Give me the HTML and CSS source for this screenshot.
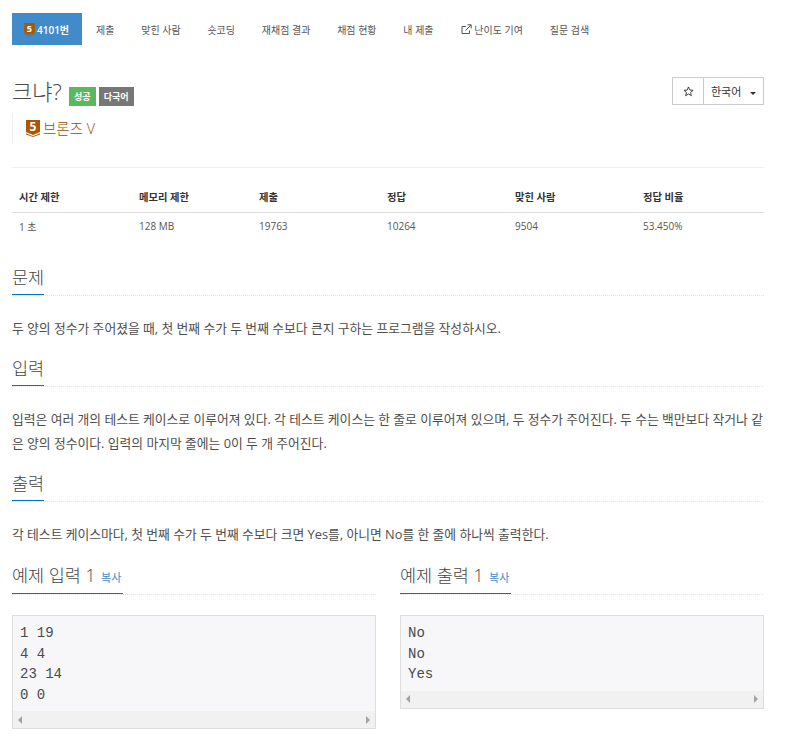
FILE: index.html
```html
<!DOCTYPE html>
<html lang="ko">
<head>
  <meta charset="UTF-8">
  <meta name="viewport" content="width=device-width, initial-scale=1.0">
  <title>4101번: 크냐?</title>
  <link rel="stylesheet" href="styles.css">
</head>
<body>
  <div class="page">
    <ul class="nav-tabs">
      <li class="active">
        <a href="#">
          <svg class="tier-icon tier-icon-small" viewBox="0 0 14 17"><path d="M0 0H14V12L7 15L0 12Z" fill="#ad5600"/><path d="M0 13.2L7 16.2L14 13.2V14.4L7 17L0 14.4Z" fill="#ad5600"/><text x="7" y="11.2" text-anchor="middle" class="tier-num">5</text></svg>
          4101번
        </a>
      </li>
      <li><a href="#">제출</a></li>
      <li><a href="#">맞힌 사람</a></li>
      <li><a href="#">숏코딩</a></li>
      <li><a href="#">재채점 결과</a></li>
      <li><a href="#">채점 현황</a></li>
      <li><a href="#">내 제출</a></li>
      <li>
        <a href="#">
          <svg class="ext-icon" viewBox="0 0 11 11"><path d="M8.5 6.5V9.5H1V2.5H5M4.5 6.5L10 1M6.5 .8H10.2V4.5" fill="none" stroke="#555" stroke-width="1"/></svg>
          난이도 기여
        </a>
      </li>
      <li><a href="#">질문 검색</a></li>
    </ul>

    <div class="title-row">
      <div class="title-left">
        <h1>크냐?</h1>
        <span class="label label-green">성공</span>
        <span class="label label-gray">다국어</span>
      </div>
      <div class="btn-group">
        <button class="btn btn-star">
          <svg class="star-icon" viewBox="0 0 12 12"><path d="M6 1L7.4 4.4L11 4.7L8.3 7L9.1 10.6L6 8.7L2.9 10.6L3.7 7L1 4.7L4.6 4.4Z" fill="none" stroke="#333" stroke-width="1"/></svg>
        </button>
        <button class="btn btn-lang">한국어 <span class="caret"></span></button>
      </div>
    </div>

    <blockquote class="tier-quote">
      <svg class="tier-icon" viewBox="0 0 14 17"><path d="M0 0H14V12L7 15L0 12Z" fill="#ad5600"/><path d="M0 13.2L7 16.2L14 13.2V14.4L7 17L0 14.4Z" fill="#ad5600"/><text x="7" y="11.2" text-anchor="middle" class="tier-num">5</text></svg>
      <a href="#">브론즈 V</a>
    </blockquote>

    <table class="info">
      <thead>
        <tr>
          <th class="col-1">시간 제한</th>
          <th class="col-1">메모리 제한</th>
          <th class="col-2">제출</th>
          <th class="col-2">정답</th>
          <th class="col-2">맞힌 사람</th>
          <th>정답 비율</th>
        </tr>
      </thead>
      <tbody>
        <tr>
          <td>1 초</td>
          <td>128 MB</td>
          <td>19763</td>
          <td>10264</td>
          <td>9504</td>
          <td>53.450%</td>
        </tr>
      </tbody>
    </table>

    <section class="section">
      <div class="headline"><h2>문제</h2></div>
      <p>두 양의 정수가 주어졌을 때, 첫 번째 수가 두 번째 수보다 큰지 구하는 프로그램을 작성하시오.</p>
    </section>

    <section class="section">
      <div class="headline"><h2>입력</h2></div>
      <p>입력은 여러 개의 테스트 케이스로 이루어져 있다. 각 테스트 케이스는 한 줄로 이루어져 있으며, 두 정수가 주어진다. 두 수는 백만보다 작거나 같은 양의 정수이다. 입력의 마지막 줄에는 0이 두 개 주어진다.</p>
    </section>

    <section class="section">
      <div class="headline"><h2>출력</h2></div>
      <p>각 테스트 케이스마다, 첫 번째 수가 두 번째 수보다 크면 Yes를, 아니면 No를 한 줄에 하나씩 출력한다.</p>
    </section>

    <div class="samples">
      <div class="sample">
        <div class="headline"><h2>예제 입력 1 <a class="copy" href="#">복사</a></h2></div>
        <div class="pre-box">
          <pre>1 19
4 4
23 14
0 0</pre>
          <div class="scrollbar"><span class="arrow-left"></span><span class="arrow-right"></span></div>
        </div>
      </div>
      <div class="sample">
        <div class="headline"><h2>예제 출력 1 <a class="copy" href="#">복사</a></h2></div>
        <div class="pre-box">
          <pre>No
No
Yes</pre>
          <div class="scrollbar"><span class="arrow-left"></span><span class="arrow-right"></span></div>
        </div>
      </div>
    </div>
  </div>
</body>
</html>
```

FILE: styles.css
```css
/* 기본 */
body {
  margin: 0;
  font-family: "Open Sans", "Noto Sans CJK KR", sans-serif;
  font-size: 12px;
  color: #555;
  background: #fff;
}

a {
  text-decoration: none;
}

.page {
  width: 752px;
  height: 741px;
  overflow: hidden;
  margin-left: 12px;
  padding-top: 13px;
  box-sizing: border-box;
}

/* 탭 */
.nav-tabs {
  display: flex;
  margin: 0;
  padding: 0;
  list-style: none;
  height: 32px;
}

.nav-tabs a {
  display: flex;
  align-items: center;
  gap: 3px;
  height: 32px;
  padding: 0 13.4px;
  font-size: 10px;
  color: #555;
}

.nav-tabs li:nth-child(2) a {
  padding-left: 14px;
}

.nav-tabs .active a {
  width: 70px;
  box-sizing: border-box;
  padding: 0 0 0 12px;
  background: #428bca;
  color: #fff;
  font-weight: 600;
}

.tier-icon {
  width: 14px;
  height: 17px;
  overflow: visible;
}

.tier-icon-small {
  width: 11px;
  height: 13px;
  margin-right: -1px;
}

.tier-num {
  font-family: "Open Sans", sans-serif;
  font-size: 12px;
  font-weight: 700;
  fill: #fff;
}

.ext-icon {
  width: 11px;
  height: 11px;
  margin: 0 -1px 0 1px;
}

/* 제목 */
.title-row {
  display: flex;
  justify-content: space-between;
  margin-top: 32px;
  height: 36px;
}

.title-left {
  display: flex;
  align-items: flex-start;
}

h1 {
  margin: 0 7px 0 0;
  font-size: 22px;
  font-weight: 300;
  line-height: 28px;
  color: #4a4a4a;
}

.label {
  margin: 10px 3px 0 0;
  height: 19px;
  line-height: 19px;
  padding: 0 5px;
  font-size: 9px;
  font-weight: 700;
  color: #fff;
}

.label-green {
  width: 17px;
  text-align: center;
  background: #5cb85c;
}

.label-gray {
  background: #777;
}

.btn-group {
  display: flex;
  height: 28px;
}

.btn {
  font-family: inherit;
  font-size: 11px;
  color: #333;
  background: #fff;
  border: 1px solid #ccc;
  padding: 0;
  height: 28px;
}

.btn-star {
  display: flex;
  align-items: center;
  justify-content: center;
  width: 32px;
}

.star-icon {
  width: 11px;
  height: 11px;
}

.btn-lang {
  width: 61px;
  margin-left: -1px;
}

.caret {
  display: inline-block;
  margin-left: 6px;
  vertical-align: middle;
  border-top: 3px solid #333;
  border-left: 3px solid transparent;
  border-right: 3px solid transparent;
}

.tier-quote {
  display: flex;
  align-items: center;
  gap: 3px;
  height: 31px;
  margin: 0;
  padding-left: 13px;
  border-left: 1px solid #eee;
  font-size: 14.5px;
  font-weight: 300;
}

.tier-quote a {
  margin-top: -3px;
  color: #994c00;
}

/* 정보 표 */
.info {
  width: 100%;
  margin-top: 23px;
  border-top: 1px solid #eee;
  border-collapse: collapse;
  table-layout: fixed;
  font-size: 10px;
}

.info th {
  height: 36px;
  padding: 0 7px 8px;
  vertical-align: bottom;
  text-align: left;
  font-size: 10.3px;
  font-weight: 700;
  color: #333;
  border-bottom: 1px solid #ddd;
}

.col-1 {
  width: 120px;
  box-sizing: border-box;
}

.col-2 {
  width: 128px;
  box-sizing: border-box;
}

.info td {
  height: 26px;
  padding: 0 7px;
}

/* 본문 */
.section {
  margin-top: 17px;
}

.info + .section {
  margin-top: 27px;
}

.headline {
  border-bottom: 1px dotted #e4e4e4;
  height: 29px;
}

h2 {
  display: inline-block;
  margin: 0;
  height: 28px;
  border-bottom: 1px solid #0076c0;
  font-size: 17.5px;
  font-weight: 300;
  line-height: 22px;
  color: #444;
}

.section p {
  margin: 20px 0 0;
  line-height: 24px;
  font-size: 12.8px;
  color: #4d4d4d;
  word-break: break-all;
}

/* 예제 */
.samples {
  display: flex;
  justify-content: space-between;
  margin-top: 19px;
}

.sample {
  width: 364px;
}

.sample h2 {
  line-height: 20px;
}

.copy {
  margin: 0 2px 0 1px;
  font-size: 11px;
  font-weight: 400;
  color: #428bca;
}

.pre-box {
  margin-top: 20px;
  border: 1px solid #ddd;
  background: #f7f7f9;
}

pre {
  margin: 0;
  padding: 7px 7px 6px 7px;
  font-family: "Liberation Mono", monospace;
  font-size: 14px;
  line-height: 20.6px;
  color: #4a4a4a;
}

.scrollbar {
  display: flex;
  justify-content: space-between;
  align-items: center;
  height: 17px;
  padding: 0 5px;
  background: #f1f1f1;
}

.arrow-left {
  border-top: 4px solid transparent;
  border-bottom: 4px solid transparent;
  border-right: 4px solid #a3a3a3;
}

.arrow-right {
  border-top: 4px solid transparent;
  border-bottom: 4px solid transparent;
  border-left: 4px solid #a3a3a3;
}
```
